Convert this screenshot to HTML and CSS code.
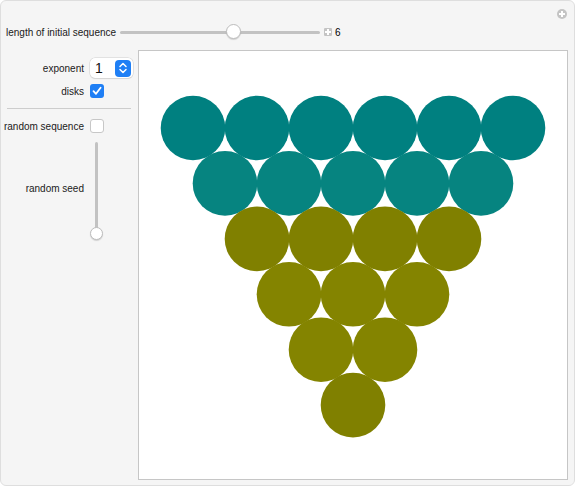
FILE: index.html
```html
<!DOCTYPE html>
<html lang="en">
<head>
    <meta charset="UTF-8">
    <title>Disk Triangle</title>
    <link rel="stylesheet" href="styles.css">
</head>
<body>
    <div class="panel">
        <!-- top right reset icon -->
        <span class="corner-icon"></span>

        <div class="topbar">
            <span class="label">length of initial sequence</span>
            <div class="hslider">
                <div class="track"></div>
                <div class="thumb"></div>
            </div>
            <span class="plus-box"></span>
            <span class="value">6</span>
        </div>

        <div class="main">
            <div class="controls">
                <div class="row">
                    <span class="label">exponent</span>
                    <div class="popup">
                        <span class="popup-text">1</span>
                        <span class="popup-btn">
                            <svg width="10" height="14" viewBox="0 0 10 14">
                                <path d="M2 5.5 L5 2.5 L8 5.5 M2 8.5 L5 11.5 L8 8.5" fill="none" stroke="#fff" stroke-width="1.5" stroke-linecap="round" stroke-linejoin="round"/>
                            </svg>
                        </span>
                    </div>
                </div>
                <div class="row">
                    <span class="label">disks</span>
                    <span class="checkbox checked">
                        <svg width="14" height="14" viewBox="0 0 14 14">
                            <path d="M3.5 7.2 L6 9.8 L10.6 3.8" fill="none" stroke="#fff" stroke-width="1.8" stroke-linecap="round" stroke-linejoin="round"/>
                        </svg>
                    </span>
                </div>
                <div class="divider"></div>
                <div class="row">
                    <span class="label">random sequence</span>
                    <span class="checkbox"></span>
                </div>
                <div class="row seed-row">
                    <span class="label">random seed</span>
                    <div class="vslider">
                        <div class="vtrack"></div>
                        <div class="thumb vthumb"></div>
                    </div>
                </div>
            </div>

            <div class="plot">
                <svg width="428" height="428" viewBox="0 0 428 428">
                    <g fill="#008080">
                        <circle cx="54" cy="77" r="32.3"/>
                        <circle cx="118" cy="77" r="32.3"/>
                        <circle cx="182" cy="77" r="32.3"/>
                        <circle cx="246" cy="77" r="32.3"/>
                        <circle cx="310" cy="77" r="32.3"/>
                        <circle cx="374" cy="77" r="32.3"/>
                    </g>
                    <g fill="#068480">
                        <circle cx="86" cy="132.4" r="32.3"/>
                        <circle cx="150" cy="132.4" r="32.3"/>
                        <circle cx="214" cy="132.4" r="32.3"/>
                        <circle cx="278" cy="132.4" r="32.3"/>
                        <circle cx="342" cy="132.4" r="32.3"/>
                    </g>
                    <g fill="#808000">
                        <circle cx="118" cy="187.9" r="32.3"/>
                        <circle cx="182" cy="187.9" r="32.3"/>
                        <circle cx="246" cy="187.9" r="32.3"/>
                        <circle cx="310" cy="187.9" r="32.3"/>
                    </g>
                    <g fill="#848400">
                        <circle cx="150" cy="243.3" r="32.3"/>
                        <circle cx="214" cy="243.3" r="32.3"/>
                        <circle cx="278" cy="243.3" r="32.3"/>
                        <circle cx="182" cy="298.7" r="32.3"/>
                        <circle cx="246" cy="298.7" r="32.3"/>
                    </g>
                    <circle cx="214" cy="354.1" r="32.3" fill="#808000"/>
                </svg>
            </div>
        </div>
    </div>
</body>
</html>
```

FILE: styles.css
```css
body {
    margin: 0;
    background: #fff;
    font-family: "Liberation Sans", Arial, sans-serif;
    font-size: 10px;
    color: #1a1a1a;
}
.panel {
    position: relative;
    width: 573px;
    height: 484px;
    background: #f5f5f5;
    border: 1px solid #dedede;
    border-radius: 6px;
}

/* small reset icon, top right */
.corner-icon {
    position: absolute;
    top: 8px;
    right: 7px;
    width: 10px;
    height: 10px;
    border-radius: 50%;
    background: #c4c4c4;
}
.corner-icon::before,
.corner-icon::after {
    content: "";
    position: absolute;
    background: #fff;
}
.corner-icon::before { left: 2px; top: 4px; width: 6px; height: 2px; }
.corner-icon::after { left: 4px; top: 2px; width: 2px; height: 6px; }

.topbar {
    display: flex;
    align-items: center;
    height: 22px;
    padding: 20px 0 7px 5px;
}
.hslider {
    position: relative;
    width: 200px;
    height: 16px;
    margin-left: 4px;
}
.track {
    position: absolute;
    left: 0;
    right: 0;
    top: 7px;
    height: 3px;
    border-radius: 2px;
    background: #c2c2c2;
}
.thumb {
    position: absolute;
    width: 15px;
    height: 15px;
    border-radius: 50%;
    background: #fff;
    border: 1px solid #bdbdbd;
    box-shadow: 0 1px 1px rgba(0, 0, 0, 0.15);
    box-sizing: border-box;
}
.hslider .thumb {
    left: 106px;
    top: 0;
}
.plus-box {
    position: relative;
    width: 8px;
    height: 8px;
    margin-left: 4px;
    background: #c4c4c4;
    border-radius: 1px;
}
.plus-box::before,
.plus-box::after {
    content: "";
    position: absolute;
    background: #fff;
}
.plus-box::before { left: 1px; top: 3px; width: 6px; height: 2px; }
.plus-box::after { left: 3px; top: 1px; width: 2px; height: 6px; }
.value {
    margin-left: 3px;
    color: #000;
}

.main {
    display: flex;
    align-items: flex-start;
}
.controls {
    width: 133px;
    padding-top: 8px;
    margin-right: 4px;
}
.row {
    display: grid;
    grid-template-columns: 83px auto;
    column-gap: 6px;
    align-items: center;
}
.row .label {
    text-align: right;
}
.popup {
    position: relative;
    width: 43px;
    height: 20px;
    background: #fff;
    border-radius: 5px;
    box-shadow: 0 0 0 0.5px #cfcfcf, 0 1px 1px rgba(0, 0, 0, 0.1);
    box-sizing: border-box;
    display: flex;
    align-items: center;
    justify-content: space-between;
    padding: 0 2px 0 5px;
}
.popup-text {
    font-size: 14px;
    color: #111;
}
.popup-btn {
    width: 16px;
    height: 17px;
    border-radius: 4px;
    background: #1f7ff5;
    display: flex;
    align-items: center;
    justify-content: center;
}
.checkbox {
    width: 14px;
    height: 14px;
    border-radius: 3px;
    background: #fff;
    border: 1px solid #c7c7c7;
    box-sizing: border-box;
    display: block;
}
.checkbox.checked {
    background: #1f7ff5;
    border: none;
}
.row + .row {
    margin-top: 6px;
}
.divider {
    height: 1px;
    background: #cdcdcd;
    margin: 10px 3px 10px 6px;
}
.row.seed-row {
    margin-top: 3px;
}
.vslider {
    position: relative;
    width: 14px;
    height: 104px;
}
.vtrack {
    position: absolute;
    left: 5px;
    top: 6px;
    bottom: 8px;
    width: 3px;
    border-radius: 2px;
    background: #c2c2c2;
}
.vthumb {
    width: 13px;
    height: 13px;
    left: 0;
    bottom: 0;
}

.plot {
    width: 428px;
    height: 428px;
    background: #fff;
    border: 1px solid #c6c6c6;
}
.plot svg {
    display: block;
}
```
